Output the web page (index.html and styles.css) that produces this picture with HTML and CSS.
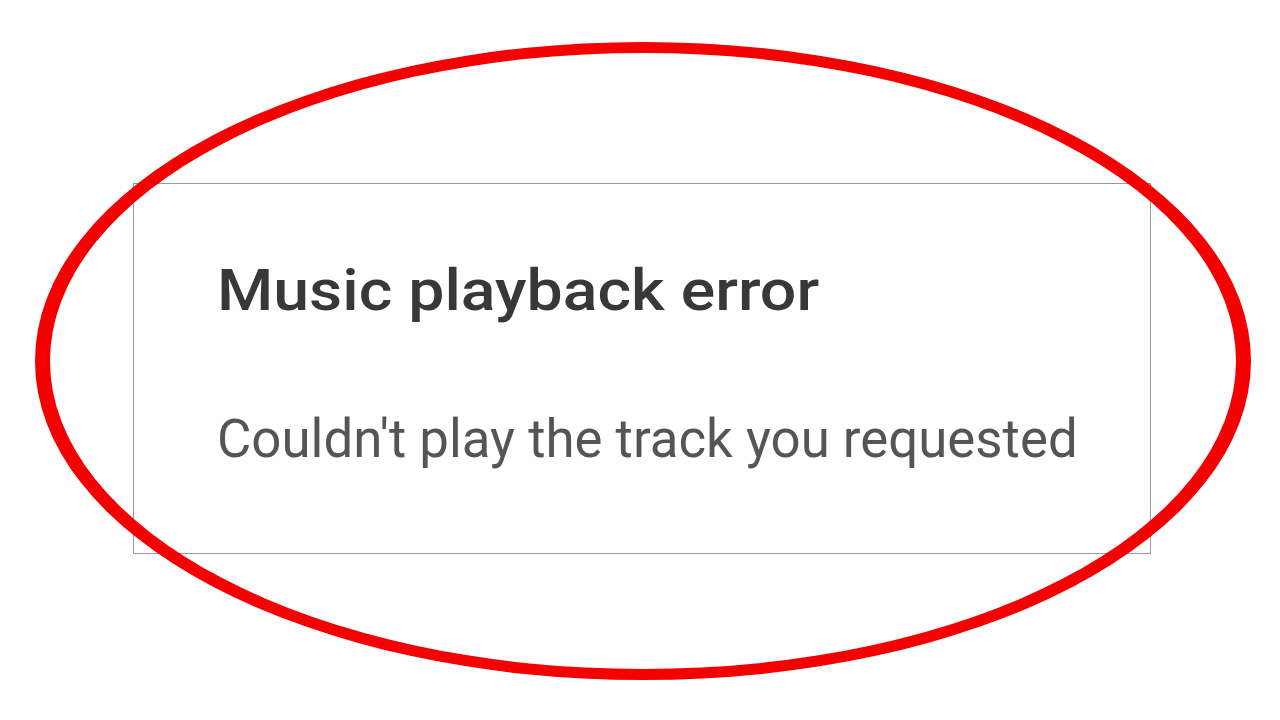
FILE: index.html
```html
<!DOCTYPE html>
<html lang="en">
<head>
  <meta charset="UTF-8">
  <meta name="viewport" content="width=device-width, initial-scale=1.0">
  <title>Music playback error</title>
  <link rel="stylesheet" href="styles.css">
</head>
<body>
  <div class="stage">
    <div class="dialog">
      <h1 class="dialog-title"><span class="stretch">Music playback error</span></h1>
      <p class="dialog-message">Couldn't play the track you requested</p>
    </div>
    <!-- red highlight ring drawn over the dialog -->
    <svg class="ring" width="1280" height="720" viewBox="0 0 1280 720">
      <path fill="#f40000" fill-rule="evenodd"
        d="M35 361 A608 319 0 1 0 1251 361 A608 319 0 1 0 35 361 Z
           M50 361 A593 308 0 1 0 1236 361 A593 308 0 1 0 50 361 Z"/>
    </svg>
  </div>
</body>
</html>
```

FILE: styles.css
```css
body {
  margin: 0;
  padding: 0;
  background-color: #fff;
  font-family: Roboto, "Liberation Sans", sans-serif;
}
.stage {
  position: relative;
  width: 1280px;
  height: 720px;
  overflow: hidden;
  padding-top: 183px;
  padding-left: 133px;
  box-sizing: border-box;
}
.dialog {
  width: 1018px;
  height: 371px;
  box-sizing: border-box;
  border: 1px solid #9a9a9a;
  padding: 0 0 0 83px;
  display: flex;
  flex-direction: column;
}
.dialog-title {
  margin: 72px 0 0 0;
  font-size: 58px;
  font-weight: 500;
  line-height: 68px;
  color: #383838;
}
.stretch {
  display: inline-block;
  transform: scaleX(1.11);
  transform-origin: left center;
}
.dialog-message {
  margin: 84px 0 0 0;
  font-size: 52.8px;
  font-weight: 400;
  line-height: 62px;
  color: #555;
}
.ring {
  position: absolute;
  top: 0;
  left: 0;
}
```
